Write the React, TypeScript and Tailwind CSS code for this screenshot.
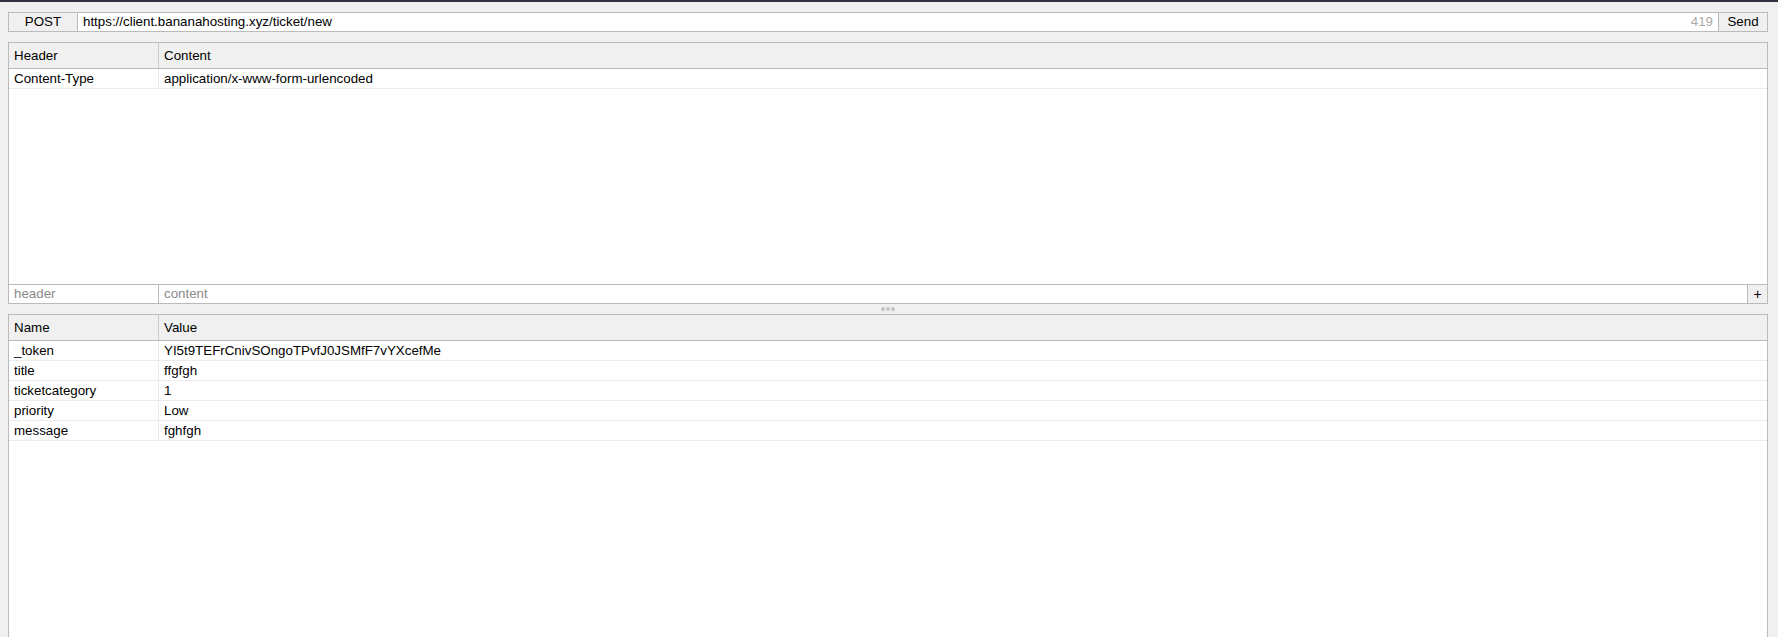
import React from 'react';

const headers = [{ name: 'Content-Type', value: 'application/x-www-form-urlencoded' }];

const params = [
  { name: '_token', value: 'YI5t9TEFrCnivSOngoTPvfJ0JSMfF7vYXcefMe' },
  { name: 'title', value: 'ffgfgh' },
  { name: 'ticketcategory', value: '1' },
  { name: 'priority', value: 'Low' },
  { name: 'message', value: 'fghfgh' },
];

function HeadRow({ left, right }: { left: string; right: string }) {
  return (
    <div className="flex h-[26px] shrink-0 border-b border-[#bbbbbb] bg-[#f0f0f0]">
      <div className="flex w-[150px] items-center border-r border-[#cccccc] pl-[5px]">{left}</div>
      <div className="flex flex-1 items-center pl-[5px]">{right}</div>
    </div>
  );
}

function DataRow({ left, right }: { left: string; right: string }) {
  return (
    <div className="flex h-5 shrink-0 border-b border-[#ececec] bg-white">
      <div className="flex w-[150px] items-center border-r border-[#ececec] pl-[5px]">{left}</div>
      <div className="flex flex-1 items-center pl-[5px]">{right}</div>
    </div>
  );
}

export default function App() {
  return (
    <div
      className="flex h-[637px] flex-col overflow-hidden bg-[#f0f0f0] text-[13.33px] leading-none text-black"
      style={{ fontFamily: '"Liberation Sans", Arial, sans-serif' }}
    >
      <div className="h-[2px] shrink-0 bg-[#2e303c]" />

      <div className="flex min-h-0 flex-1 flex-col pl-2 pr-[10px] pt-[10px]">
        {/* Request line */}
        <div className="flex h-5 shrink-0 border border-[#bbbbbb] bg-white">
          <div className="flex w-[69px] items-center justify-center border-r border-[#bbbbbb] bg-[#f0f0f0]">POST</div>
          <div className="flex flex-1 items-center pl-[5px]">https://client.bananahosting.xyz/ticket/new</div>
          <div className="flex items-center pr-[5px] text-[#aaaaaa]">419</div>
          <div className="flex w-[49px] items-center justify-center border-l border-[#bbbbbb] bg-[#f0f0f0]">Send</div>
        </div>

        {/* Headers */}
        <div className="mt-[10px] flex h-[262px] shrink-0 flex-col border border-[#bbbbbb] bg-white">
          <HeadRow left="Header" right="Content" />
          {headers.map((h) => (
            <DataRow key={h.name} left={h.name} right={h.value} />
          ))}
          <div className="flex-1" />
          <div className="flex h-[19px] shrink-0 border-t border-[#bbbbbb] text-[#8a8a8a]">
            <div className="flex w-[150px] items-center border-r border-[#bbbbbb] pl-[5px]">header</div>
            <div className="flex flex-1 items-center pl-[5px]">content</div>
            <div className="flex w-5 items-center justify-center border-l border-[#bbbbbb] bg-[#f0f0f0] text-[14px] text-black">+</div>
          </div>
        </div>

        {/* Splitter */}
        <div className="flex h-[10px] shrink-0 items-center justify-center gap-px">
          <span className="h-1 w-1 rounded-full bg-[#c4c4c4]" />
          <span className="h-1 w-1 rounded-full bg-[#c4c4c4]" />
          <span className="h-1 w-1 rounded-full bg-[#c4c4c4]" />
        </div>

        {/* Params */}
        <div className="flex h-[340px] shrink-0 flex-col border border-[#bbbbbb] bg-white">
          <HeadRow left="Name" right="Value" />
          {params.map((p) => (
            <DataRow key={p.name} left={p.name} right={p.value} />
          ))}
        </div>
      </div>
    </div>
  );
}
